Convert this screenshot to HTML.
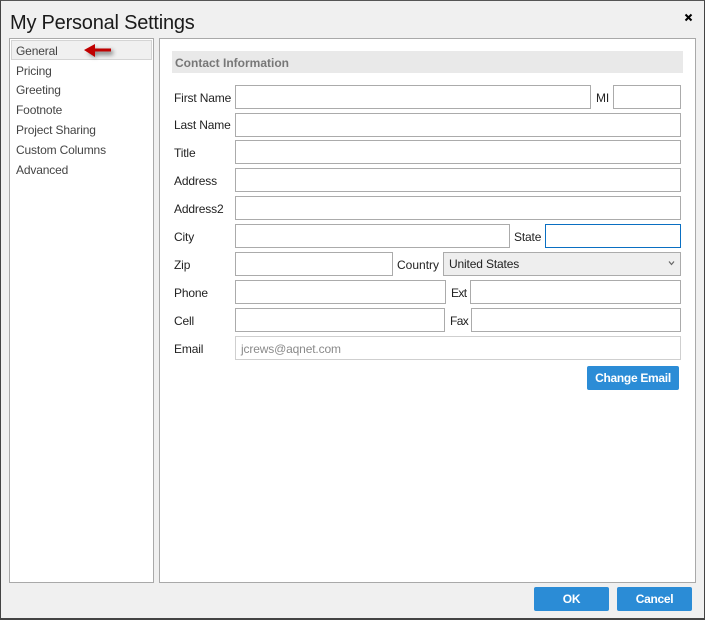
<!DOCTYPE html>
<html>
<head>
<meta charset="utf-8">
<style>
html,body{margin:0;padding:0;background:#f0f0f0}
body{width:705px;height:620px;position:relative;overflow:hidden;font-family:"Liberation Sans",sans-serif;font-size:12px;letter-spacing:-.15px;color:#222}
.a{position:absolute;box-sizing:border-box}
.frame{left:0;top:0;width:705px;height:620px;border:1px solid #444;border-bottom-width:2px;border-top-color:#555}
.panel{background:#fff;border:1px solid #a9a9a9}
.i{position:absolute;box-sizing:border-box;background:#fff;border:1px solid #ababab;height:24px}
.l{position:absolute;white-space:nowrap;line-height:16px;color:#222}
.n{position:absolute;left:16px;white-space:nowrap;line-height:16px;color:#444}
.b{position:absolute;box-sizing:border-box;background:#2b8cd6;color:#fff;font-weight:bold;text-align:center;border-radius:2px;letter-spacing:-.3px}
</style>
</head>
<body>
<div class="a frame"></div>
<div class="a" style="left:10px;top:10px;font-size:20px;letter-spacing:-.22px;line-height:26px;color:#1a1a1a;white-space:nowrap">My Personal Settings</div>
<svg class="a" style="left:684px;top:13px" width="10" height="10" viewBox="0 0 10 10"><path d="M1.500 1.500L7.500 7.500M7.500 1.500L1.500 7.500" stroke="#000" stroke-width="2" fill="none"/></svg>

<div class="a panel" style="left:9px;top:38px;width:145px;height:545px"></div>
<div class="a panel" style="left:159px;top:38px;width:537px;height:545px"></div>

<div class="a" style="left:11px;top:40px;width:141px;height:20px;background:#f0f0f0;border:1px solid #d4d4d4"></div>
<div class="n" style="top:43px">General</div>
<div class="n" style="top:63px">Pricing</div>
<div class="n" style="top:82px">Greeting</div>
<div class="n" style="top:102px">Footnote</div>
<div class="n" style="top:122px">Project Sharing</div>
<div class="n" style="top:142px">Custom Columns</div>
<div class="n" style="top:162px">Advanced</div>

<svg class="a" style="left:80px;top:40px" width="40" height="26" viewBox="0 0 40 26">
<path d="M7 13L16 7V10H33V15H16V18Z" fill="#444" opacity=".6" style="filter:blur(2px)"/>
<path d="M4 10L15 4V8.500H31V11.500H15V17Z" fill="#c00000"/>
</svg>

<div class="a" style="left:172px;top:51px;width:511px;height:22px;background:#e9e9e9"></div>
<div class="l" style="left:175px;top:55px;font-weight:bold;color:#777;letter-spacing:0">Contact Information</div>

<div class="l" style="left:174px;top:90px">First Name</div>
<div class="l" style="left:174px;top:117px">Last Name</div>
<div class="l" style="left:174px;top:145px">Title</div>
<div class="l" style="left:174px;top:173px">Address</div>
<div class="l" style="left:174px;top:201px">Address2</div>
<div class="l" style="left:174px;top:229px">City</div>
<div class="l" style="left:174px;top:257px">Zip</div>
<div class="l" style="left:174px;top:285px">Phone</div>
<div class="l" style="left:174px;top:313px">Cell</div>
<div class="l" style="left:174px;top:341px">Email</div>

<div class="i" style="left:235px;top:85px;width:356px"></div>
<div class="l" style="left:596px;top:90px">MI</div>
<div class="i" style="left:613px;top:85px;width:68px"></div>
<div class="i" style="left:235px;top:113px;width:446px"></div>
<div class="i" style="left:235px;top:140px;width:446px"></div>
<div class="i" style="left:235px;top:168px;width:446px"></div>
<div class="i" style="left:235px;top:196px;width:446px"></div>
<div class="i" style="left:235px;top:224px;width:275px"></div>
<div class="l" style="left:514px;top:229px">State</div>
<div class="i" style="left:545px;top:224px;width:136px;border-color:#0a6fc2"></div>
<div class="i" style="left:235px;top:252px;width:158px"></div>
<div class="l" style="left:397px;top:257px;letter-spacing:0">Country</div>
<div class="i" style="left:443px;top:252px;width:238px;background:#eeeeee"></div>
<div class="l" style="left:449px;top:256px">United States</div>
<svg class="a" style="left:668px;top:260px" width="8" height="7" viewBox="0 0 8 7"><path d="M1 1.500L3.500 4.500L6 1.500" stroke="#666" stroke-width="1.200" fill="none"/></svg>
<div class="i" style="left:235px;top:280px;width:211px"></div>
<div class="l" style="left:451px;top:285px;letter-spacing:-.6px">Ext</div>
<div class="i" style="left:470px;top:280px;width:211px"></div>
<div class="i" style="left:235px;top:308px;width:210px"></div>
<div class="l" style="left:450px;top:313px;letter-spacing:-.6px">Fax</div>
<div class="i" style="left:471px;top:308px;width:210px"></div>
<div class="i" style="left:235px;top:336px;width:446px;border-color:#cfcfcf"></div>
<div class="l" style="left:241px;top:341px;color:#8a8a8a">jcrews@aqnet.com</div>

<div class="b" style="left:587px;top:366px;width:92px;height:24px;line-height:25px">Change Email</div>
<div class="b" style="left:534px;top:587px;width:75px;height:24px;line-height:25px">OK</div>
<div class="b" style="left:617px;top:587px;width:75px;height:24px;line-height:25px">Cancel</div>
</body>
</html>
